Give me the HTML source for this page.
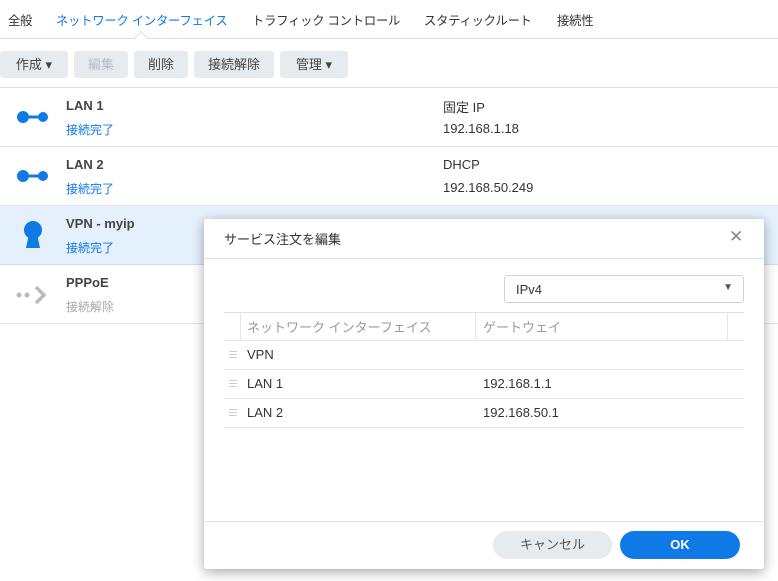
<!DOCTYPE html>
<html><head><meta charset="utf-8"><style>
*{box-sizing:border-box;margin:0;padding:0}
body{width:778px;height:581px;overflow:hidden;background:#fff;font-family:"Liberation Sans","Noto Sans CJK JP",sans-serif;font-size:13px;color:#333;position:relative}
.abs{position:absolute}
.tabs{position:absolute;left:0;top:0;width:778px;height:39px;border-bottom:1px solid #d8dfe6}
.tab{position:absolute;top:11px;font-size:12.3px;color:#333;letter-spacing:-0.2px}
.btn{position:absolute;top:51px;height:27px;background:#e6ebf0;border-radius:3px;line-height:27px;text-align:center;font-size:13px;color:#444}
.row{position:absolute;left:0;width:778px;height:59px;border-bottom:1px solid #e3e7eb}
.name{position:absolute;left:66px;top:10px;font-weight:bold;font-size:13px;color:#444}
.st{position:absolute;left:66px;top:33px;font-size:12px;color:#0f7ae5}
.c2{position:absolute;left:443px;font-size:13px;color:#333}
.dlg{position:absolute;left:204px;top:219px;width:560px;height:350px;background:#fff;border-radius:3px;box-shadow:0 3px 12px rgba(0,0,0,.35)}
.tr{position:absolute;left:20px;width:520px;height:29px;border-bottom:1px solid #e3e7eb;font-size:13px}
.h{position:absolute;left:5px;top:10px;width:8px;height:7px;border-top:1px solid #ccd;border-bottom:1px solid #ccd}
.h:after{content:"";position:absolute;left:0;top:2px;width:8px;border-top:1px solid #ccd}
</style></head><body>
<div class="tabs">
<span class="tab" style="left:8px">全般</span>
<span class="tab" style="left:56px;color:#0f7ae5">ネットワーク インターフェイス</span>
<span class="tab" style="left:252px">トラフィック コントロール</span>
<span class="tab" style="left:424px">スタティックルート</span>
<span class="tab" style="left:557px">接続性</span>
</div>
<div class="abs" style="left:136px;top:33px;width:10px;height:10px;background:#fff;border-left:1px solid #d8dfe6;border-top:1px solid #d8dfe6;transform:rotate(45deg)"></div>
<div class="btn" style="left:0;width:68px">作成 ▾</div>
<div class="btn" style="left:74px;width:54px;color:#b8bec4">編集</div>
<div class="btn" style="left:134px;width:54px">削除</div>
<div class="btn" style="left:194px;width:80px">接続解除</div>
<div class="btn" style="left:280px;width:68px">管理 ▾</div>
<div class="abs" style="left:0;top:87px;width:778px;border-top:1px solid #d8dfe6"></div>
<div class="row" style="top:88px">
<svg class="abs" style="left:16px;top:20px" width="34" height="18"><circle cx="7" cy="9" r="6" fill="#0f7ae5"/><rect x="7" y="7.5" width="20" height="3" fill="#0f7ae5"/><circle cx="27" cy="9" r="5" fill="#0f7ae5"/></svg>
<div class="name">LAN 1</div><div class="st">接続完了</div>
<div class="c2" style="top:9px">固定 IP</div><div class="c2" style="top:33px">192.168.1.18</div></div>
<div class="row" style="top:147px">
<svg class="abs" style="left:16px;top:20px" width="34" height="18"><circle cx="7" cy="9" r="6" fill="#0f7ae5"/><rect x="7" y="7.5" width="20" height="3" fill="#0f7ae5"/><circle cx="27" cy="9" r="5" fill="#0f7ae5"/></svg>
<div class="name">LAN 2</div><div class="st">接続完了</div>
<div class="c2" style="top:10px">DHCP</div><div class="c2" style="top:33px">192.168.50.249</div></div>
<div class="row" style="top:206px;background:#e4f0fb;border-bottom-color:#d0dde8">
<svg class="abs" style="left:22px;top:14px" width="22" height="32"><circle cx="11" cy="10" r="9" fill="#0f7ae5"/><path d="M7 14 L15 14 L18 28 L4 28 Z" fill="#0f7ae5"/></svg>
<div class="name">VPN - myip</div><div class="st">接続完了</div></div>
<div class="row" style="top:265px">
<svg class="abs" style="left:14px;top:18px" width="36" height="24"><circle cx="5" cy="12" r="2.5" fill="#bbb"/><circle cx="13" cy="12" r="2.5" fill="#bbb"/><path d="M22 4 L30 12 L22 20" stroke="#bbb" stroke-width="3.5" fill="none"/></svg>
<div class="name">PPPoE</div><div class="st" style="color:#aaa">接続解除</div></div>

<div class="dlg">
<div class="abs" style="left:20px;top:10px;font-size:13px;color:#333">サービス注文を編集</div>
<div class="abs" style="left:525px;top:8px;font-size:17px;color:#888">✕</div>
<div class="abs" style="left:0;top:39px;width:560px;border-top:1px solid #dde3e8"></div>
<div class="abs" style="left:300px;top:56px;width:240px;height:28px;border:1px solid #ccd3da;border-radius:3px;padding:6px 11px;font-size:13px">IPv4<span style="position:absolute;right:10px;top:6px;font-size:10px;color:#555">▼</span></div>
<div class="tr" style="top:93px;height:29px;border-top:1px solid #dde3e8;color:#999">
<div class="abs" style="left:16px;top:0;height:28px;border-left:1px solid #e3e7eb"></div>
<span class="abs" style="left:23px;top:4px">ネットワーク インターフェイス</span>
<div class="abs" style="left:251px;top:0;height:28px;border-left:1px solid #e3e7eb"></div>
<span class="abs" style="left:259px;top:4px">ゲートウェイ</span>
<div class="abs" style="left:503px;top:0;height:28px;border-left:1px solid #e3e7eb"></div></div>
<div class="tr" style="top:122px"><div class="h"></div><span class="abs" style="left:23px;top:6px">VPN</span></div>
<div class="tr" style="top:151px"><div class="h"></div><span class="abs" style="left:23px;top:6px">LAN 1</span><span class="abs" style="left:259px;top:6px">192.168.1.1</span></div>
<div class="tr" style="top:180px"><div class="h"></div><span class="abs" style="left:23px;top:6px">LAN 2</span><span class="abs" style="left:259px;top:6px">192.168.50.1</span></div>
<div class="abs" style="left:0;top:302px;width:560px;border-top:1px solid #dde3e8"></div>
<div class="abs" style="left:289px;top:312px;width:119px;height:28px;border-radius:14px;background:#e6ebf0;text-align:center;line-height:28px;color:#555">キャンセル</div>
<div class="abs" style="left:416px;top:312px;width:120px;height:28px;border-radius:14px;background:#0f7ae5;text-align:center;line-height:28px;color:#fff;font-weight:bold">OK</div>
</div>
</body></html>
